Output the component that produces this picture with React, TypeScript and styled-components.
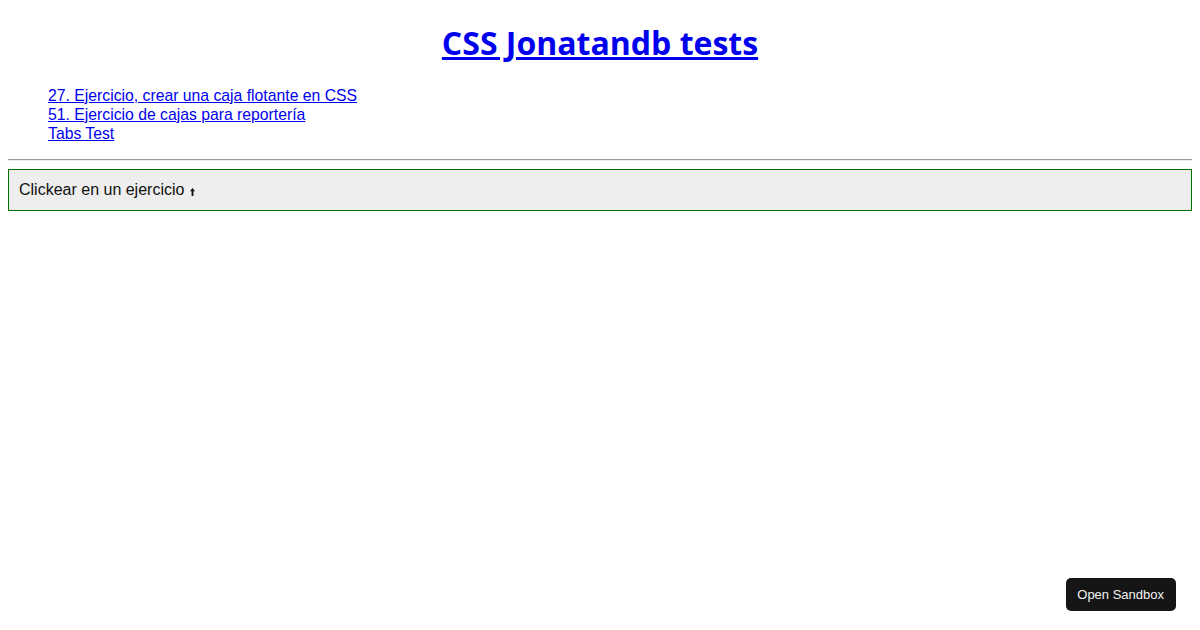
import React from 'react';
import styled, { createGlobalStyle } from 'styled-components';

const GlobalStyles = createGlobalStyle`
  body {
    margin: 8px;
    font-family: "Liberation Sans", Arial, sans-serif;
    background: #fff;
  }
`;

const links = [
  '27. Ejercicio, crear una caja flotante en CSS',
  '51. Ejercicio de cajas para reportería',
  'Tabs Test',
];

const App = () => {
  return (
    <>
      <GlobalStyles />
      <Title>
        <TitleLink href="#">CSS Jonatandb tests</TitleLink>
      </Title>
      <LinkList>
        {links.map((l) => (
          <li key={l}>
            <ItemLink href="#">{l}</ItemLink>
          </li>
        ))}
      </LinkList>
      <Rule />
      <Panel>
        Clickear en un ejercicio
        <Arrow viewBox="0 0 5 8" aria-hidden>
          <path d="M2.5 0 L5 3.2 L3.4 3.2 L3.4 8 L1.6 8 L1.6 3.2 L0 3.2 Z" fill="#111" />
        </Arrow>
      </Panel>
      <SandboxButton>Open Sandbox</SandboxButton>
    </>
  );
};

export default App;

const Title = styled.h1`
  font-family: "Open Sans", sans-serif;
  font-size: 32px;
  line-height: 44px;
  font-weight: 700;
  text-align: center;
  margin: 13px 0 21px;
`;

const TitleLink = styled.a`
  color: #0000ee;
`;

const LinkList = styled.ul`
  list-style: none;
  margin: 16px 0;
  padding-left: 40px;
  font-size: 15.75px;
  line-height: 19px;
`;

const ItemLink = styled.a`
  color: #0000ee;
`;

const Rule = styled.hr`
  margin: 8px 0;
  border: none;
  border-top: 1px solid #9a9a9a;
  border-bottom: 1px solid #eee;
`;

const Panel = styled.div`
  border: 1px solid #007000;
  background: #eeeeee;
  padding: 11px 10px;
  font-size: 16px;
  color: #111;
  display: flex;
  align-items: center;
`;

const Arrow = styled.svg`
  width: 5px;
  height: 8px;
  margin-left: 6px;
  margin-top: 3px;
`;

const SandboxButton = styled.button`
  position: fixed;
  right: 24px;
  bottom: 19px;
  height: 33px;
  padding: 0 12px 0 11px;
  border: none;
  border-radius: 5px;
  background: #151515;
  color: #f2f2f2;
  font-family: "Liberation Sans", Arial, sans-serif;
  font-size: 13px;
`;
